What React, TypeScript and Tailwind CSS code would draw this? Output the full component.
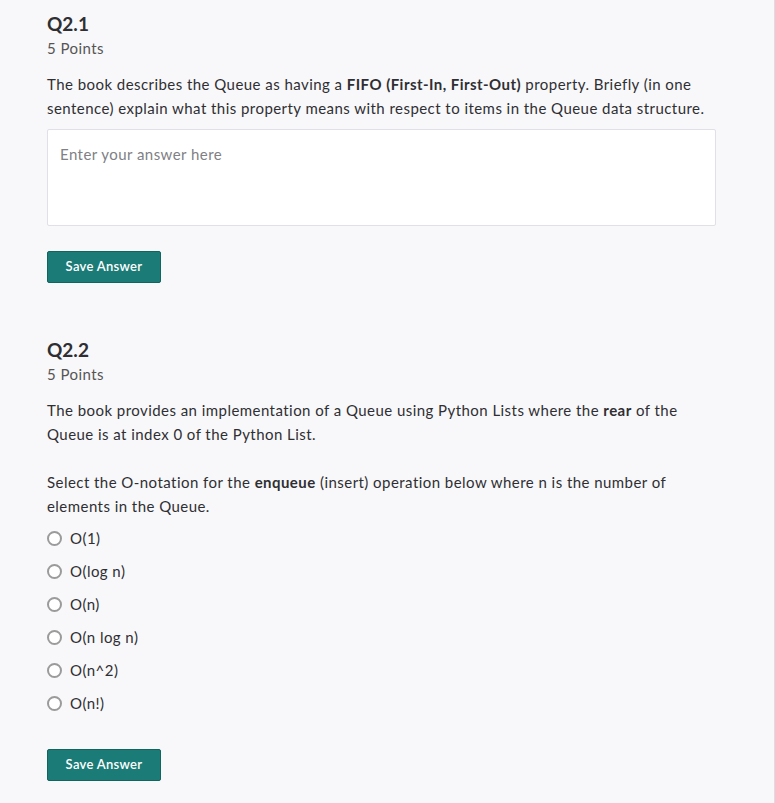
import React from 'react';

const Radio = ({ label }: { label: string }) => (
  <label className="flex items-center h-[33px] gap-[8px] cursor-pointer">
    <span className="w-[15px] h-[15px] rounded-full border-2 border-[#9b9b9b] bg-white shrink-0" />
    <span>{label}</span>
  </label>
);

const SaveButton = () => (
  <button className="h-[32px] w-[114px] rounded-[2px] bg-[#1b7b76] border border-[#13635f] text-white text-[13px] font-semibold tracking-[0.3px]">
    Save Answer
  </button>
);

export default function App() {
  const options = ['O(1)', 'O(log n)', 'O(n)', 'O(n log n)', 'O(n^2)', 'O(n!)'];

  return (
    <div className="w-[775px] h-[803px] bg-[#f8f8fa] border-r border-[#dcdce4] text-[#2f2f33] font-['Lato','Open_Sans',sans-serif] text-[15px] tracking-[0.45px] overflow-hidden">
      <div className="pl-[47px] pr-[40px] pt-[12px]">
        <h2 className="text-[19px] font-bold leading-[24px] tracking-normal">Q2.1</h2>
        <p className="text-[#555] leading-[24px]">5 Points</p>
        <p className="mt-[12px] leading-[24px]">
          The book describes the Queue as having a <b>FIFO (First-In, First-Out)</b> property. Briefly (in one
          <br />
          sentence) explain what this property means with respect to items in the Queue data structure.
        </p>
        <div className="mt-[9px] mr-[18px] h-[97px] bg-white border border-[#e0e0e6] rounded-[2px] px-[12px] pt-[13px] text-[#808085]">
          Enter your answer here
        </div>
        <div className="mt-[25px]">
          <SaveButton />
        </div>

        <h2 className="mt-[55px] text-[19px] font-bold leading-[24px] tracking-normal">Q2.2</h2>
        <p className="text-[#555] leading-[24px]">5 Points</p>
        <p className="mt-[12px] leading-[24px]">
          The book provides an implementation of a Queue using Python Lists where the <b>rear</b> of the
          <br />
          Queue is at index 0 of the Python List.
        </p>
        <p className="mt-[24px] leading-[24px]">
          Select the O-notation for the <b>enqueue</b> (insert) operation below where n is the number of
          <br />
          elements in the Queue.
        </p>
        <div className="mt-[4px] flex flex-col">
          {options.map(o => (
            <Radio key={o} label={o} />
          ))}
        </div>
        <div className="mt-[29px]">
          <SaveButton />
        </div>
      </div>
    </div>
  );
}
